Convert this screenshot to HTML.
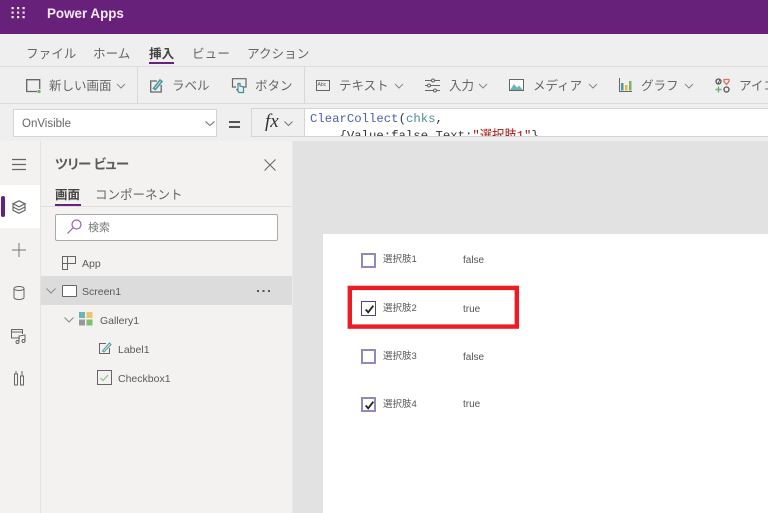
<!DOCTYPE html>
<html lang="ja"><head><meta charset="utf-8"><style>
html,body{margin:0;padding:0}
html{background:#e2e2e2}
body{width:768px;height:513px;overflow:hidden;position:relative;background:#e2e2e2;font-family:"Liberation Sans","Noto Sans CJK JP",sans-serif;color:#555;filter:blur(.3px)}
.a{position:absolute;white-space:nowrap}
svg{position:absolute;overflow:visible}
.m{font-size:12.6px;top:45px;line-height:18px;color:#666}
.t{font-size:12.5px;top:77px;line-height:18px;color:#666}
.l{font-size:10.5px;color:#5a5a5a;line-height:14px}
.c{font-size:9.5px;color:#555;line-height:12px}
.cb{position:absolute;left:361px;width:15px;height:15px;border:2px solid #8f8abd;background:#fff;box-sizing:border-box}
.s{position:absolute;width:1px;background:#d8d8d8;top:67px;height:36px}
</style></head><body>
<div class="a" style="left:0;top:0;width:768px;height:34px;background:#68217a"></div>
<svg style="left:11px;top:7px" width="16" height="12" fill="#eee"><rect x="0.500" y="0" width="2.200" height="2.200"/><rect x="6" y="0" width="2.200" height="2.200"/><rect x="11.500" y="0" width="2.200" height="2.200"/><rect x="0.500" y="4.500" width="2.200" height="2.200"/><rect x="6" y="4.500" width="2.200" height="2.200"/><rect x="11.500" y="4.500" width="2.200" height="2.200"/><rect x="0.500" y="9" width="2.200" height="2.200"/><rect x="6" y="9" width="2.200" height="2.200"/><rect x="11.500" y="9" width="2.200" height="2.200"/></svg>
<div class="a" style="left:47px;top:5.500px;font-size:13.400px;font-weight:bold;color:#f3e9f5;line-height:16px">Power Apps</div>

<div class="a" style="left:0;top:34px;width:768px;height:107px;background:#efefef"></div>
<div class="a" style="left:0;top:66px;width:768px;height:1px;background:#dcdcdc"></div>
<div class="a" style="left:0;top:103px;width:768px;height:1px;background:#dcdcdc"></div>
<div class="a m" style="left:26px">ファイル</div>
<div class="a m" style="left:93px">ホーム</div>
<div class="a m" style="left:149px;color:#444;font-weight:bold">挿入</div>
<div class="a" style="left:149px;top:62px;width:25px;height:2px;background:#68217a"></div>
<div class="a m" style="left:192px">ビュー</div>
<div class="a m" style="left:247px">アクション</div>

<svg style="left:26px;top:79px" width="15" height="14" fill="none" stroke="#666" stroke-width="1.300"><path d="M11 12.500H.7V.7h13V10"/><rect x="11.500" y="11" width="3" height="3" fill="#6fb36f" stroke="none"/></svg>
<div class="a t" style="left:49px">新しい画面</div>
<svg style="left:116px;top:83px" width="10" height="6" fill="none" stroke="#888"><path d="M1 1l4 4 4-4"/></svg>
<div class="s" style="left:137px"></div>
<svg style="left:150px;top:78px" width="13" height="15" fill="none" stroke="#666" stroke-width="1.300"><path d="M7 3H.7v11h10.500V7"/><path d="M3.500 10.500L10 2l2 1.500-6.500 8z" stroke="#4b9a9e" stroke-width="1.600"/></svg>
<div class="a t" style="left:172px">ラベル</div>
<svg style="left:232px;top:78px" width="15" height="16" fill="none" stroke="#666" stroke-width="1.200"><path d="M4 9H.5V.7h13.500V9H12"/><path d="M6 5.500v6.500l-1.500-1 2.500 3.500h4.500V9L8 8V5.500z" stroke="#3d8e95" fill="#efefef"/></svg>
<div class="a t" style="left:255px">ボタン</div>
<div class="s" style="left:304px"></div>
<svg style="left:316px;top:80px" width="14" height="11" fill="none" stroke="#666"><rect x=".5" y=".5" width="13" height="10"/></svg>
<div class="a" style="left:317.500px;top:82px;font-size:5px;line-height:7px;color:#555">Abc</div>
<div class="a t" style="left:339px">テキスト</div>
<svg style="left:394px;top:83px" width="10" height="6" fill="none" stroke="#888"><path d="M1 1l4 4 4-4"/></svg>
<svg style="left:425px;top:78px" width="15" height="14" fill="none" stroke="#666"><path d="M0 2.500h15M0 7.500h15M0 12.500h15"/><circle cx="8" cy="2.500" r="1.500" fill="#efefef"/><circle cx="4" cy="7.500" r="1.500" fill="#efefef"/><circle cx="10" cy="12.500" r="1.500" fill="#efefef"/></svg>
<div class="a t" style="left:449px">入力</div>
<svg style="left:478px;top:83px" width="10" height="6" fill="none" stroke="#888"><path d="M1 1l4 4 4-4"/></svg>
<svg style="left:509px;top:79px" width="15" height="12"><rect x=".5" y=".5" width="14" height="11" fill="#fff" stroke="#666"/><path d="M1 11L5 5l3 3.500 2-2 4 4.500z" fill="#6bb5b8"/></svg>
<div class="a t" style="left:533px">メディア</div>
<svg style="left:588px;top:83px" width="10" height="6" fill="none" stroke="#888"><path d="M1 1l4 4 4-4"/></svg>
<svg style="left:619px;top:78px" width="13" height="14"><path d="M.5 0v13.500H13" fill="none" stroke="#666"/><rect x="2" y="5" width="2.500" height="7.500" fill="#4b9a9e"/><rect x="6" y="7" width="2.500" height="5.500" fill="#e9b44c"/><rect x="10" y="3" width="2.500" height="9.500" fill="#7ab55c"/></svg>
<div class="a t" style="left:641px">グラフ</div>
<svg style="left:684px;top:83px" width="10" height="6" fill="none" stroke="#888"><path d="M1 1l4 4 4-4"/></svg>
<svg style="left:715px;top:78px" width="15" height="15" fill="none"><circle cx="3.500" cy="3.500" r="2.500" stroke="#555" stroke-width="1.300"/><path d="M3 6L5 1" stroke="#555"/><path d="M11.500 6.500L9 3.500V1.500h5v2z" stroke="#d9705a" stroke-width="1.300"/><path d="M3.500 8.500v6M.5 11.500h6" stroke="#6fb36f" stroke-width="1.400"/><circle cx="11.500" cy="11.500" r="2.500" stroke="#555" stroke-width="1.300"/></svg>
<div class="a t" style="left:739px">アイコン</div>

<div class="a" style="left:13px;top:109px;width:204px;height:28px;background:#fff;border:1px solid #d4d4d4;box-sizing:border-box"></div>
<div class="a" style="left:22px;top:116.500px;font-size:11.500px;line-height:15px;color:#666">OnVisible</div>
<svg style="left:205px;top:121px" width="11" height="6" fill="none" stroke="#666"><path d="M.5.500l4.500 4 4.500-4"/></svg>
<div class="a" style="left:229px;top:121px;width:11px;height:2px;background:#555"></div>
<div class="a" style="left:229px;top:126px;width:11px;height:2px;background:#555"></div>
<div class="a" style="left:251px;top:108px;width:517px;height:29px;background:#fff;border-top:1px solid #d4d4d4;border-bottom:1px solid #d4d4d4;border-left:1px solid #d4d4d4;box-sizing:border-box;overflow:hidden"></div>
<div class="a" style="left:252px;top:109px;width:52px;height:27px;background:#f0f0f0;border-right:1px solid #d4d4d4"></div>
<div class="a" style="left:265px;top:111px;font-family:'Liberation Serif',serif;font-style:italic;font-size:19px;line-height:22px;color:#333">fx</div>
<svg style="left:284px;top:121px" width="9" height="5" fill="none" stroke="#777"><path d="M.5.500l4 4 4-4"/></svg>
<div class="a" style="left:305px;top:111px;width:463px;height:25px;overflow:hidden;font-family:'Liberation Mono','Noto Sans CJK JP',monospace;font-size:12.300px;line-height:17px;padding-left:5px;box-sizing:border-box;color:#333"><span style="color:#4a5fb0">ClearCollect</span>(<span style="color:#4b8e96">chks</span>,<br>&nbsp;&nbsp;&nbsp;&nbsp;{Value:false,Text:<span style="color:#a31515">"選択肢1"</span>}</div>

<div class="a" style="left:0;top:141px;width:292px;height:372px;background:#f3f2f1"></div>
<div class="a" style="left:40px;top:141px;width:1px;height:372px;background:#e3e3e3"></div>
<div class="a" style="left:0;top:185px;width:40px;height:43px;background:#fff"></div>
<div class="a" style="left:1px;top:196px;width:4px;height:21px;border-radius:2px;background:#68217a"></div>
<svg style="left:12px;top:158.500px" width="14" height="11" stroke="#666" stroke-width="1.200"><path d="M0 .5h14M0 5.500h14M0 10.500h14"/></svg>
<svg style="left:12px;top:200px" width="14" height="14" fill="none" stroke="#666" stroke-width="1.200"><path d="M7 .8l6 3-6 3-6-3z"/><path d="M1 3.800v6.500l6 3 6-3V3.800M1 7l6 3 6-3"/></svg>
<svg style="left:12px;top:243px" width="14" height="14" stroke="#777"><path d="M7 0v14M0 7h14"/></svg>
<svg style="left:13px;top:286px" width="12" height="14" fill="none" stroke="#666"><ellipse cx="6" cy="2.500" rx="5" ry="2"/><path d="M1 2.500v9c0 1 2 2 5 2s5-1 5-2v-9"/></svg>
<svg style="left:11px;top:329px" width="16" height="15" fill="none" stroke="#666"><path d="M9 9H.5V.5h11V5"/><path d="M1 3h10"/><path d="M8 13V7l6-1v6"/><circle cx="6.500" cy="13" r="1.500"/><circle cx="12.500" cy="12" r="1.500"/></svg>
<svg style="left:14px;top:371px" width="10" height="15" fill="none" stroke="#666"><path d="M2 0v3M.5 3h3v11h-3zM8 0v5M6.500 5h3v9h-3z"/></svg>

<div class="a" style="left:55px;top:156px;font-size:13.500px;font-weight:bold;line-height:18px;color:#5a5a5a;font-feature-settings:'palt';letter-spacing:-.7px">ツリー ビュー</div>
<svg style="left:264px;top:158.500px" width="12" height="12" stroke="#666"><path d="M.5.500l11 11M11.500.500l-11 11"/></svg>
<div class="a" style="left:55px;top:187px;font-size:12.500px;line-height:16px;color:#444;font-weight:bold">画面</div>
<div class="a" style="left:95px;top:187px;font-size:12.500px;line-height:16px;color:#666">コンポーネント</div>
<div class="a" style="left:55px;top:204px;width:26px;height:2px;background:#68217a"></div>
<div class="a" style="left:41px;top:206px;width:251px;height:1px;background:#dedede"></div>
<div class="a" style="left:55px;top:214px;width:223px;height:27px;background:#fff;border:1px solid #aaa;border-radius:2px;box-sizing:border-box"></div>
<svg style="left:67px;top:219px" width="15" height="16" fill="none" stroke="#9a63a8" stroke-width="1.200"><circle cx="9.500" cy="5.500" r="4.500"/><path d="M6 9L.5 14.500"/></svg>
<div class="a" style="left:88px;top:221.500px;font-size:11px;line-height:13px;color:#777">検索</div>
<svg style="left:62px;top:256px" width="14" height="14" fill="none" stroke="#666"><path d="M.5.500h13v7h-13zM5.500.500v13h-5v-6"/></svg>
<div class="a l" style="left:82px;top:257px">App</div>

<div class="a" style="left:41px;top:276px;width:251px;height:29px;background:#dcdcdc"></div>
<svg style="left:46px;top:288px" width="10" height="6" fill="none" stroke="#888"><path d="M.5.500l4.500 4.500L9.500.500"/></svg>
<div class="a" style="left:62px;top:285px;width:13px;height:10px;border:1px solid #666;background:#fff;border-radius:1px"></div>
<div class="a l" style="left:82px;top:285px">Screen1</div>
<div class="a" style="left:257px;top:290px;width:2px;height:1.500px;background:#555;box-shadow:5.500px 0 #555,11px 0 #555"></div>
<svg style="left:64px;top:317px" width="10" height="6" fill="none" stroke="#888"><path d="M.5.500l4.500 4.500L9.500.500"/></svg>
<svg style="left:79px;top:312px" width="14" height="14"><rect width="6" height="6" fill="#6bb5b8"/><rect x="7.500" width="6" height="6" fill="#f0c36d"/><rect y="7.500" width="6" height="6" fill="#999"/><rect x="7.500" y="7.500" width="6" height="6" fill="#7fbf6f"/></svg>
<div class="a l" style="left:100px;top:314px">Gallery1</div>
<svg style="left:99px;top:342px" width="13" height="13" fill="none" stroke="#666"><path d="M7 1.500H.5v10h10V6"/><path d="M3.500 9L10.500 1l1.500 1.500L5 10z" stroke="#4b9a9e"/></svg>
<div class="a l" style="left:118px;top:343px">Label1</div>
<svg style="left:97px;top:370px" width="15" height="15" fill="none"><rect x=".5" y=".5" width="14" height="14" stroke="#666"/><path d="M3.500 8l2.500 2.500L11 5" stroke="#7fbf6f"/></svg>
<div class="a l" style="left:118px;top:372px">Checkbox1</div>

<div class="a" style="left:292px;top:141px;width:1px;height:372px;background:#e9e9e9"></div>
<div class="a" style="left:323px;top:234px;width:445px;height:279px;background:#fff"></div>

<div class="cb" style="top:253px"></div>
<div class="a c" style="left:383px;top:254px">選択肢1</div>
<div class="a c" style="left:463px;top:255px;font-size:10px">false</div>
<div class="cb" style="top:301px;border:1.500px solid #4a4390"></div>
<svg style="left:364.500px;top:305px" width="10" height="9" fill="none" stroke="#222" stroke-width="1.800"><path d="M.7 4.500l2.500 2.800L8.300.7"/></svg>
<div class="a c" style="left:383px;top:303px">選択肢2</div>
<div class="a c" style="left:463px;top:303.500px;font-size:10px">true</div>
<div class="cb" style="top:349px"></div>
<div class="a c" style="left:383px;top:351px">選択肢3</div>
<div class="a c" style="left:463px;top:352px;font-size:10px">false</div>
<div class="cb" style="top:397px"></div>
<svg style="left:364.500px;top:401px" width="10" height="9" fill="none" stroke="#222" stroke-width="1.800"><path d="M.7 4.500l2.500 2.800L8.300.7"/></svg>
<div class="a c" style="left:383px;top:399px">選択肢4</div>
<div class="a c" style="left:463px;top:399px;font-size:10px">true</div>

<svg style="left:0;top:0" width="768" height="513" fill="none"><rect x="349.800" y="287.900" width="167" height="38.700" stroke="#ed1c24" stroke-width="4.400"/></svg>
</body></html>
